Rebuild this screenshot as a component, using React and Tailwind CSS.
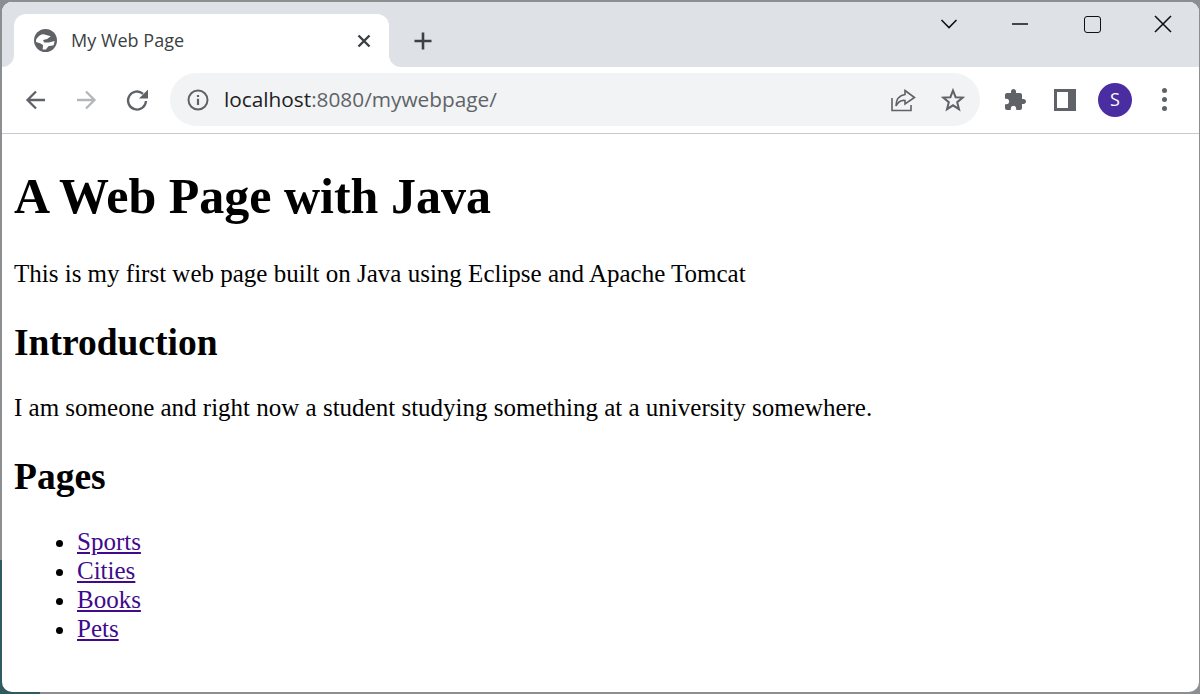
import React from "react";

const sans = "font-['Open_Sans','Noto_Sans',sans-serif]";

function Globe() {
  return (
    <svg width="23" height="23" viewBox="0 0 24 24" className="shrink-0">
      <circle cx="12" cy="12" r="12" fill="#5f6368" />
      <path d="M2 11.5 C4 7.5 7 5.5 10 5.5 L17.5 7.5 L13.7 10.5 L9.5 11.5 L10.5 14 L15.5 14.2 L21.5 12.5 L20.5 17 L15 18 L12.5 21.5 L9 21.5 L9.5 17 L7 15 L2.2 13.5 Z" fill="#fff" />
    </svg>
  );
}

function Line({ d, color = "#5f6368", w = 2, size = 24 }) {
  return (
    <svg width={size} height={size} viewBox="0 0 24 24" className="shrink-0">
      <path d={d} fill="none" stroke={color} strokeWidth={w} />
    </svg>
  );
}

function Chrome() {
  return (
    <div className={`${sans} bg-white`}>
      <div className="relative flex h-[65px] bg-[#dee1e6]">
        <div className="absolute bottom-0 left-0 h-[12px] w-[12px] bg-white">
          <div className="h-full w-full rounded-br-[12px] bg-[#dee1e6]" />
        </div>
        <div className="absolute bottom-0 left-[387px] h-[12px] w-[12px] bg-white">
          <div className="h-full w-full rounded-bl-[12px] bg-[#dee1e6]" />
        </div>
        <div className="ml-[12px] mt-[12px] flex h-[53px] w-[375px] items-center rounded-t-[12px] bg-white pl-[20px]">
          <Globe />
          <span className="ml-[14px] text-[18px] text-[#3c4043]">My Web Page</span>
          <svg width="16" height="16" viewBox="0 0 16 16" className="ml-auto mr-[17px]">
            <path d="M2.5 2.5 L13.5 13.5 M13.5 2.5 L2.5 13.5" stroke="#3c4043" strokeWidth="2.4" />
          </svg>
        </div>
        <svg width="20" height="20" viewBox="0 0 20 20" className="ml-[24px] mt-[29px]">
          <path d="M10 1.5 V18.5 M1.5 10 H18.5" stroke="#3c4043" strokeWidth="2.6" />
        </svg>
        <div className="absolute right-0 top-0 flex items-start">
          <svg width="18" height="12" viewBox="0 0 18 12" className="mr-[53px] mt-[16px]">
            <path d="M1.5 2 L9 9.5 L16.5 2" fill="none" stroke="#111" strokeWidth="1.6" />
          </svg>
          <svg width="18" height="4" viewBox="0 0 18 4" className="mr-[55px] mt-[20px]">
            <path d="M1 2 H17" stroke="#111" strokeWidth="1.6" />
          </svg>
          <div className="mr-[53px] mt-[14px] h-[17px] w-[17px] rounded-[3px] border-[1.5px] border-[#111]" />
          <svg width="18" height="18" viewBox="0 0 18 18" className="mr-[27px] mt-[13px]">
            <path d="M1 1 L17 17 M17 1 L1 17" stroke="#111" strokeWidth="1.6" />
          </svg>
        </div>
      </div>
      <div className="flex h-[67px] items-center border-b border-[#c8c9cb] bg-white pb-[1px]">
        <div className="ml-[22px] flex w-[146px] items-center">
          <Line d="M21 12 H3.5 M12 3.5 L3.5 12 L12 20.5" w={2.3} />
          <div className="ml-[26px]">
            <Line d="M3 12 H20.5 M12 3.5 L20.5 12 L12 20.5" color="#b4b6b9" w={2.3} />
          </div>
          <svg width="24" height="24" viewBox="0 0 24 24" className="ml-[27px] shrink-0">
            <path d="M21 13 A9 9 0 1 1 18 5.8" fill="none" stroke="#5f6368" strokeWidth="2.3" />
            <path d="M23 1.6 V10.6 H14 Z" fill="#5f6368" />
          </svg>
        </div>
        <div className="flex h-[53px] w-[810px] items-center rounded-[27px] bg-[#f1f3f4] pl-[17px]">
          <svg width="22" height="22" viewBox="0 0 22 22" className="shrink-0">
            <circle cx="11" cy="11" r="9.5" fill="none" stroke="#5f6368" strokeWidth="2" />
            <path d="M11 9.8 V16 M11 6 V8" stroke="#5f6368" strokeWidth="2.2" />
          </svg>
          <span className="ml-[15px] text-[20.8px] text-[#5f6368]">
            <span className="text-[#202124]">localhost</span>:8080/mywebpage/
          </span>
          <svg width="26" height="24" viewBox="0 0 26 24" className="ml-auto shrink-0">
            <path d="M2 10 V22.5 H21 V17" fill="none" stroke="#5f6368" strokeWidth="1.6" />
            <path d="M15 2.5 L24.5 9.5 L15 16 V12.5 C11 12 8 14 6 18 C6 12 9 7.5 15 6.5 Z" fill="none" stroke="#5f6368" strokeWidth="1.6" />
          </svg>
          <svg width="24" height="24" viewBox="0 0 24 24" className="ml-[25px] mr-[15px] shrink-0">
            <path d="M12 2.5 L14.6 9.2 L21.8 9.6 L16.2 14.2 L18 21.2 L12 17.3 L6 21.2 L7.8 14.2 L2.2 9.6 L9.4 9.2 Z" fill="none" stroke="#5f6368" strokeWidth="2" />
          </svg>
        </div>
        <svg width="24" height="24" viewBox="0 0 24 24" className="ml-[23px] shrink-0">
          <path d="M20.5 11 H19 V7 C19 5.9 18.1 5 17 5 H13 V3.5 C13 2.1 11.9 1 10.5 1 S8 2.1 8 3.5 V5 H4 C2.9 5 2 5.9 2 7 V10.8 H3.5 C5 10.8 6.2 12 6.2 13.5 S5 16.2 3.5 16.2 H2 V20 C2 21.1 2.9 22 4 22 H7.8 V20.5 C7.8 19 9 17.8 10.5 17.8 S13.2 19 13.2 20.5 V22 H17 C18.1 22 19 21.1 19 20 V16 H20.5 C21.9 16 23 14.9 23 13.5 S21.9 11 20.5 11 Z" fill="#5f6368" />
        </svg>
        <div className="ml-[27px] flex h-[22px] w-[22px] shrink-0 bg-[#5f6368] p-[3px] pr-[8px]">
          <div className="h-full w-full bg-white" />
        </div>
        <div className="ml-[22px] flex h-[34px] w-[34px] shrink-0 items-center justify-center rounded-full bg-[#4a2da0] text-[18px] text-white">S</div>
        <div className="ml-[30px] flex flex-col gap-[4px]">
          <div className="h-[5px] w-[5px] rounded-full bg-[#5f6368]" />
          <div className="h-[5px] w-[5px] rounded-full bg-[#5f6368]" />
          <div className="h-[5px] w-[5px] rounded-full bg-[#5f6368]" />
        </div>
      </div>
    </div>
  );
}

export default function App() {
  const links = ["Sports", "Cities", "Books", "Pets"];
  return (
    <div className="h-[694px] w-[1200px] overflow-hidden bg-[linear-gradient(#8c8f91_560px,transparent_560px),linear-gradient(90deg,#2f5a60_40px,#8c8f91_40px)] pb-[2px] pl-[2px] pr-[1px] pt-[2px]">
      <div className="h-full overflow-hidden rounded-[10px] bg-white">
        <Chrome />
        <main className="pl-[12px] font-['Liberation_Serif',serif] text-[25px] leading-[29px] text-black">
          <h1 className="pt-[35px] text-[50px] font-bold leading-[55px]">A Web Page with Java</h1>
          <p className="mt-[35px]">This is my first web page built on Java using Eclipse and Apache Tomcat</p>
          <h2 className="mt-[34px] text-[37.5px] font-bold leading-[41px]">Introduction</h2>
          <p className="mt-[30px]">I am someone and right now a student studying something at a university somewhere.</p>
          <h2 className="mt-[34px] text-[37.5px] font-bold leading-[41px]">Pages</h2>
          <ul className="mt-[30px] list-disc pl-[63px]">
            {links.map((l) => (
              <li key={l}>
                <a href="#" className="text-[#3f0a8b] underline">{l}</a>
              </li>
            ))}
          </ul>
        </main>
      </div>
    </div>
  );
}
